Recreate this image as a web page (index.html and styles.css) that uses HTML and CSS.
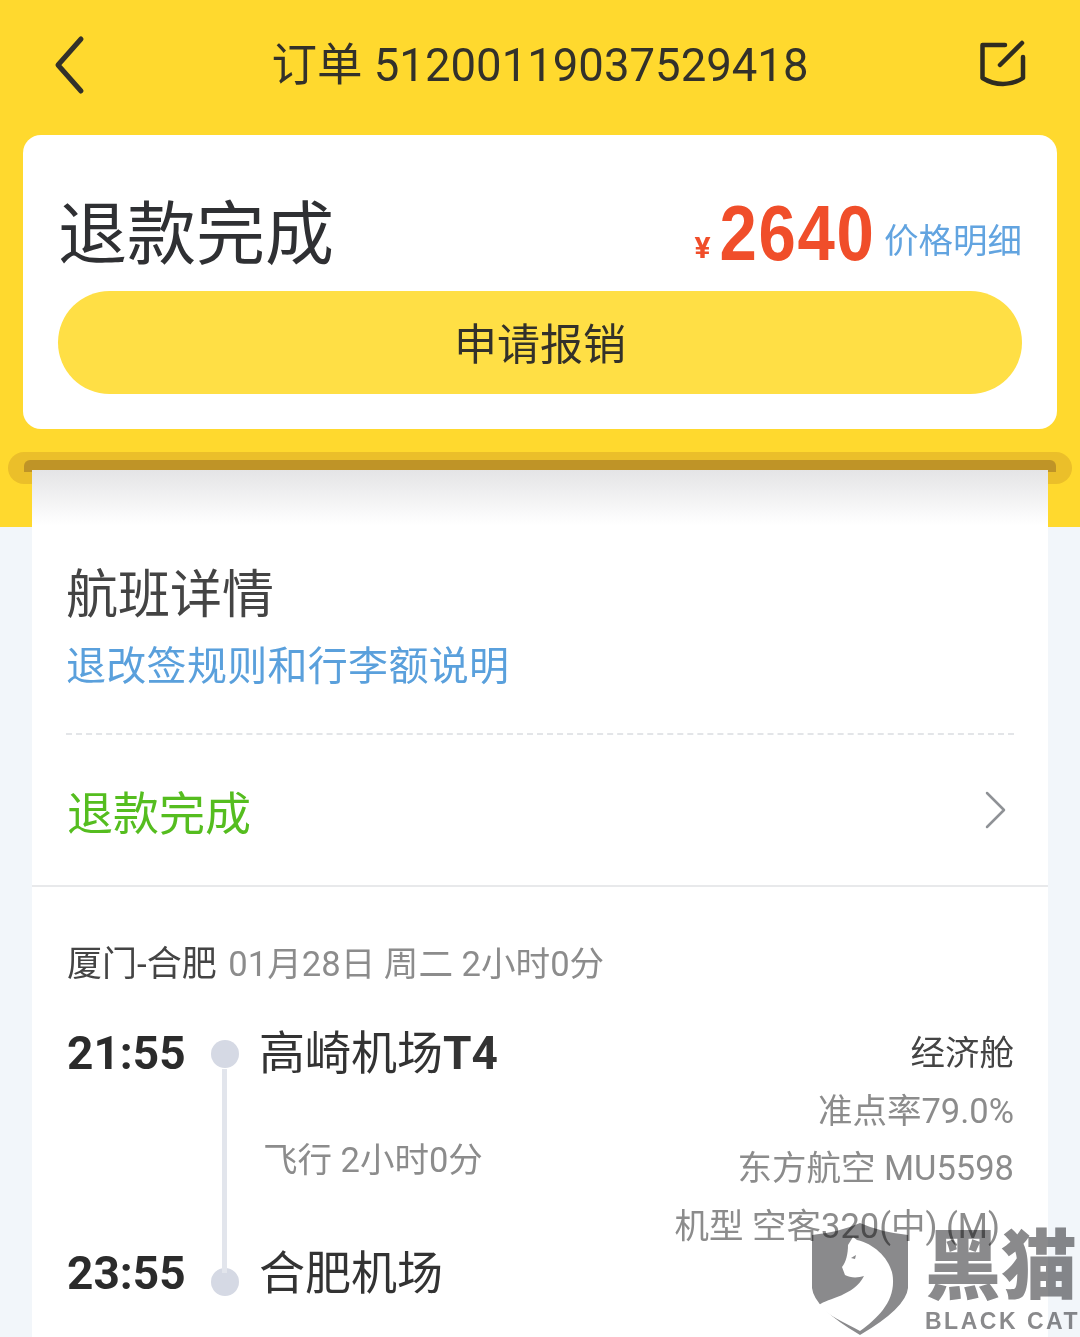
FILE: index.html
```html
<!DOCTYPE html>
<html lang="zh-CN">
<head>
  <meta charset="UTF-8">
  <meta name="viewport" content="width=device-width, initial-scale=1.0">
  <link rel="stylesheet" href="styles.css">
  <title>订单 51200119037529418</title>
</head>
<body>
  <div class="page">
    <header class="topbar">
      <svg class="icon-back" width="50" height="60" viewBox="0 0 50 60">
        <path d="M29 4 L6 30 L29 56" fill="none" stroke="#33312a" stroke-width="5" stroke-linecap="round" stroke-linejoin="round"/>
      </svg>
      <h1 class="order-title">订单 51200119037529418</h1>
      <svg class="icon-edit" width="50" height="50" viewBox="0 0 50 50">
        <path d="M27 5 H4.500 V38 Q14 44 25 44 Q36 44 45 38 V17" fill="none" stroke="#2f2c20" stroke-width="4.500" stroke-linecap="round" stroke-linejoin="round"/>
        <path d="M22 25 L44 3" fill="none" stroke="#2f2c20" stroke-width="4.500" stroke-linecap="round"/>
      </svg>
    </header>

    <section class="status-card">
      <div class="status-row">
        <div class="status-text">退款完成</div>
        <div class="price-box">
          <span class="yen">¥</span>
          <span class="price">2640</span>
          <a class="price-link">价格明细</a>
        </div>
      </div>
      <button class="claim-btn">申请报销</button>
    </section>

    <div class="ticket-slot"><div class="ticket-slot-inner"></div></div>

    <!-- ticket -->
    <main class="ticket">
      <div class="ticket-shade"></div>
      <section class="flight-head">
        <h2>航班详情</h2>
        <a class="rules-link">退改签规则和行李额说明</a>
      </section>
      <section class="refund-row">
        <span class="refund-text">退款完成</span>
        <svg width="22" height="38" viewBox="0 0 22 38">
          <path d="M2 2 L19 19 L2 36" fill="none" stroke="#8f9296" stroke-width="2.500" stroke-linecap="round" stroke-linejoin="round"/>
        </svg>
      </section>
      <section class="trip">
        <div class="trip-line">厦门-合肥 <span class="trip-date">01月28日 周二 2小时0分</span></div>
        <div class="trip-body">
          <div class="route">
            <div class="stop">
              <span class="time">21:55</span>
              <span class="dot"></span>
              <span class="airport">高崎机场<b>T4</b></span>
            </div>
            <div class="leg">
              <span class="rail"></span>
              <span class="duration">飞行 2小时0分</span>
            </div>
            <div class="stop">
              <span class="time">23:55</span>
              <span class="dot dot-end"></span>
              <span class="airport">合肥机场</span>
            </div>
          </div>
          <div class="flight-info">
            <div class="cabin">经济舱</div>
            <div>准点率79.0%</div>
            <div>东方航空 MU5598</div>
            <div class="plane">机型 空客320(中) (M)</div>
          </div>
        </div>
      </section>
    </main>

    <div class="watermark">
      <svg width="100" height="115" viewBox="0 0 100 115">
        <path d="M2 13 Q30 10 50 1 Q70 10 98 13 V66 Q96 86 50 113 Q4 86 2 66 Z" fill="#8a8a8c"/>
        <path d="M43 15 L47 18 C66 22 83 40 83 58 C84 80 68 96 50 109 C34 100 18 94 9 83 C18 76 44 74 54 54 C48 56 40 56 35 53 L32 45 C36 40 38 32 38 23 Z" fill="#fff"/>
        <path d="M41 36 L46 33 L45 37 Z" fill="#8a8a8c"/>
      </svg>
      <div class="wm-text">
        <div class="wm-cn">黑猫</div>
        <div class="wm-en">BLACK CAT</div>
      </div>
    </div>
  </div>
</body>
</html>
```

FILE: styles.css
```css
html, body {
  margin: 0;
  padding: 0;
}

.page {
  position: relative;
  width: 1080px;
  height: 1337px;
  overflow: hidden;
  background: linear-gradient(#ffd92e 527px, #f2f6fa 527px);
  font-family: Roboto, "Noto Sans CJK SC", sans-serif;
  color: #333;
}

.topbar {
  height: 135px;
  padding: 0 52px 5px;
  box-sizing: border-box;
  display: flex;
  align-items: center;
  justify-content: space-between;
}

.order-title {
  margin: 0 0 9px;
  font-size: 45.500px;
  font-weight: 400;
  white-space: nowrap;
  color: #33312a;
}

.status-card {
  margin: 0 23px;
  height: 294px;
  padding: 0 35px;
  box-sizing: border-box;
  background-color: #fff;
  border-radius: 18px;
}

.status-row {
  height: 156px;
  display: flex;
  align-items: center;
  justify-content: space-between;
  padding-top: 40px;
  box-sizing: border-box;
}

.status-text {
  margin-top: 6px;
  font-size: 69px;
  line-height: 80px;
  color: #2f3033;
}

.price-box {
  display: flex;
  align-items: center;
}

.yen {
  margin-top: 28px;
  margin-right: -16px;
  font-size: 30px;
  font-weight: 700;
  color: #f04e2a;
}

.price {
  display: inline-block;
  transform: scaleX(0.86);
  transform-origin: right center;
  font-family: "Liberation Sans", sans-serif;
  font-size: 78px;
  font-weight: 700;
  letter-spacing: 2px;
  line-height: 80px;
  color: #f04e2a;
}

.price-link {
  margin-top: 10px;
  margin-left: 8px;
  font-size: 34.500px;
  color: #62a4e0;
}

.claim-btn {
  display: block;
  width: 100%;
  height: 103px;
  padding: 0 0 4px;
  border: 0;
  border-radius: 52px;
  background-color: #ffdf45;
  font-family: inherit;
  font-size: 43px;
  color: #33312a;
}

.ticket-slot {
  margin: 23px 8px 0;
  height: 32px;
  padding: 8px 16px 0;
  box-sizing: border-box;
  background-color: #ebbf2a;
  border-radius: 16px;
}

.ticket-slot-inner {
  height: 12px;
  background-color: #bf9427;
  border-radius: 6px 6px 0 0;
}

.ticket {
  position: relative;
  margin: -14px 32px 0;
  height: 867px;
  background-color: #fff;
}

.ticket-shade {
  position: absolute;
  top: 0;
  left: 0;
  right: 0;
  height: 55px;
  background: linear-gradient(#e4e4e6, #fff);
}

.flight-head {
  position: relative;
  margin: 0 34px;
  height: 265px;
  padding-top: 93px;
  box-sizing: border-box;
  border-bottom: 2px dashed #e3e5e8;
}

.flight-head h2 {
  margin: 0;
  font-size: 52px;
  line-height: 66px;
  font-weight: 400;
  color: #444;
}

.rules-link {
  display: block;
  margin-top: 12px;
  font-size: 40px;
  letter-spacing: 0.300px;
  line-height: 52px;
  color: #5aa0dc;
}

.refund-row {
  height: 152px;
  padding: 0 41px 0 35px;
  box-sizing: border-box;
  border-bottom: 2px solid #e8e9eb;
  display: flex;
  align-items: center;
  justify-content: space-between;
}

.refund-text {
  font-size: 46px;
  color: #55bd1f;
}

.trip {
  padding: 55px 34px 0 35px;
}

.trip-line {
  font-size: 35px;
  line-height: 44px;
  color: #444;
}

.trip-date {
  margin-left: 3px;
  font-size: 34.600px;
  color: #8c8c8c;
}

.trip-body {
  margin-top: 36px;
  display: flex;
  justify-content: space-between;
}

.stop {
  display: flex;
  align-items: center;
  height: 60px;
}

.time {
  width: 144px;
  font-size: 46px;
  font-weight: 700;
  color: #2b2b2b;
}

.dot {
  width: 28px;
  height: 28px;
  margin-top: 1px;
  border-radius: 50%;
  background-color: #d5d9e4;
}

.dot-end {
  margin-top: 17px;
}

.airport {
  margin-left: 20px;
  margin-bottom: 8px;
  font-size: 46px;
  color: #333;
}

.airport b {
  font-weight: 700;
}

.leg {
  position: relative;
  height: 160px;
  padding: 0 0 12px 196px;
  box-sizing: border-box;
  display: flex;
  align-items: center;
}

.rail {
  position: absolute;
  left: 155px;
  top: -14px;
  bottom: -30px;
  width: 5px;
  background-color: #e2e5ec;
}

.duration {
  font-size: 34.500px;
  color: #8c8c8c;
}

.flight-info {
  font-size: 34.500px;
  line-height: 57px;
  text-align: right;
  color: #8c8c8c;
}

.cabin {
  color: #444;
  line-height: 60px;
}

.plane {
  margin-top: 1px;
  margin-right: 14px;
}

/* watermark over the bottom corner, text below stays visible */
.watermark {
  position: absolute;
  left: 810px;
  top: 1222px;
  display: flex;
  gap: 15px;
  mix-blend-mode: multiply;
}

.wm-text {
  color: #8a8a8c;
  font-weight: 700;
  white-space: nowrap;
}

.wm-cn {
  font-size: 76px;
  line-height: 76px;
  font-family: "Noto Sans CJK SC", sans-serif;
  font-weight: 900;
}

.wm-en {
  margin-top: 11px;
  font-family: "Liberation Sans", sans-serif;
  font-size: 23px;
  line-height: 24px;
  letter-spacing: 2.500px;
}
```
